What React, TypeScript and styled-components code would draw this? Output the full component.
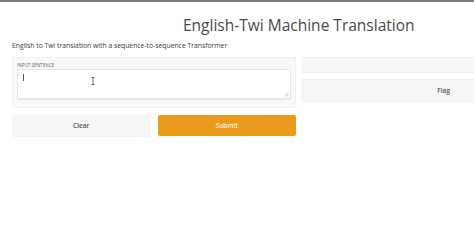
import styled, { createGlobalStyle } from "styled-components";

const GlobalStyle = createGlobalStyle`
  html, body {
    margin: 0;
    padding: 0;
    background: #ffffff;
    font-family: "Open Sans", "Liberation Sans", sans-serif;
  }
`;

const Page = styled.div`
  width: 474px;
  height: 250px;
  border-top: 2px solid #7b7b7b;
  box-sizing: border-box;
  overflow: hidden;
`;

const Title = styled.h1`
  margin: 0;
  padding: 13px 0 0 183px;
  font-size: 15.5px;
  font-weight: 400;
  color: #4a4a4a;
  line-height: 20px;
  white-space: nowrap;
`;

const Subtitle = styled.p`
  margin: 6px 0 0 12px;
  font-size: 6.8px;
  color: #3a3a3a;
  line-height: 9px;
`;

const Columns = styled.div`
  display: flex;
  gap: 6px;
  margin: 7px 0 0 12px;
`;

const LeftColumn = styled.div`
  width: 284px;
  display: flex;
  flex-direction: column;
  gap: 7px;
`;

const RightColumn = styled.div`
  flex: 1;
  display: flex;
  flex-direction: column;
  gap: 6px;
`;

const InputPanel = styled.div`
  background: #f8f8f8;
  border: 1px solid #f0f0f0;
  border-radius: 2px;
  padding: 4px 4px 8px 4px;
`;

const Label = styled.div`
  font-size: 4.6px;
  color: #666666;
  text-transform: uppercase;
  line-height: 6px;
  margin-bottom: 1px;
`;

const TextArea = styled.div`
  position: relative;
  height: 30px;
  background: #ffffff;
  border: 1px solid #e6e6e6;
  border-radius: 2px;
  box-shadow: 0 1px 1px rgba(0, 0, 0, 0.06);
  font-size: 7px;
  color: #333;
  padding: 4px 5px;
  box-sizing: border-box;
`;

const Caret = styled.span`
  display: inline-block;
  width: 1px;
  height: 7px;
  background: #555;
`;

const Grip = styled.svg`
  position: absolute;
  right: 1px;
  bottom: 1px;
`;

const Cursor = styled.svg`
  position: absolute;
  left: 73px;
  top: 7px;
`;

const ButtonRow = styled.div`
  display: flex;
  gap: 7px;
`;

const Button = styled.button<{ primary?: boolean }>`
  flex: 1;
  height: 21px;
  border: none;
  border-radius: 2px;
  font-family: inherit;
  font-size: 6.5px;
  font-weight: 600;
  background: ${(p) => (p.primary ? "#eb9a1d" : "#f6f6f6")};
  color: ${(p) => (p.primary ? "#fff4df" : "#555555")};
  box-shadow: ${(p) => (p.primary ? "none" : "0 1px 1px rgba(0,0,0,0.05)")};
  padding: 0;
`;

const OutputBox = styled.div`
  height: 14px;
  background: #f8f8f8;
  border: 1px solid #f0f0f0;
  border-right: none;
  border-radius: 2px 0 0 2px;
`;

const FlagButton = styled.div`
  height: 21px;
  background: #f6f6f6;
  border: 1px solid #eeeeee;
  border-right: none;
  border-radius: 2px 0 0 2px;
  display: flex;
  align-items: center;
  justify-content: flex-end;
  padding-right: 24px;
  font-size: 6.5px;
  font-weight: 600;
  color: #555555;
`;

export default function App() {
  return (
    <>
      <GlobalStyle />
      <Page>
        <Title>English-Twi Machine Translation</Title>
        <Subtitle>English to Twi translation with a sequence-to-sequence Transformer</Subtitle>
        <Columns>
          <LeftColumn>
            <InputPanel>
              <Label>Input Sentence</Label>
              <TextArea>
                <Caret />
                <Cursor width="4" height="8" viewBox="0 0 4 8">
                  <path d="M0.5 0.5h3M2 0.5v7M0.5 7.5h3" stroke="#444" strokeWidth="0.8" fill="none" />
                </Cursor>
                <Grip width="5" height="5" viewBox="0 0 5 5">
                  <path d="M4.5 0.5L0.5 4.5M4.5 2.5L2.5 4.5" stroke="#999" strokeWidth="0.6" />
                </Grip>
              </TextArea>
            </InputPanel>
            <ButtonRow>
              <Button>Clear</Button>
              <Button primary>Submit</Button>
            </ButtonRow>
          </LeftColumn>
          <RightColumn>
            <OutputBox />
            <FlagButton>Flag</FlagButton>
          </RightColumn>
        </Columns>
      </Page>
    </>
  );
}
